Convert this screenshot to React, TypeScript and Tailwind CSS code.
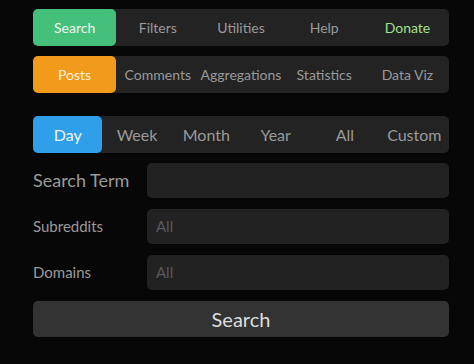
import React from "react";

const font = { fontFamily: "Lato, 'Open Sans', sans-serif" };

function TabRow({
  items,
  activeClass,
  textClass,
  extra,
}: {
  items: string[];
  activeClass: string;
  textClass: string;
  extra?: Record<string, string>;
}) {
  return (
    <div className="flex h-[37px] rounded-[5px] bg-[#232323]">
      {items.map((t, i) => (
        <div
          key={t}
          className={
            "flex flex-1 items-center justify-center rounded-[5px] " +
            textClass +
            " " +
            (i === 0 ? activeClass : extra?.[t] ?? "text-[#9a9a9a]")
          }
        >
          {t}
        </div>
      ))}
    </div>
  );
}

export default function App() {
  return (
    <div style={font} className="min-h-[364px] w-[474px] bg-[#070707] pl-[33px] pr-[25px] pt-[9px]">
      <TabRow
        items={["Search", "Filters", "Utilities", "Help", "Donate"]}
        activeClass="bg-[#45c07b] text-[#eef7ee]"
        textClass="text-[14px]"
        extra={{ Donate: "text-[#a3e08f]" }}
      />
      <div className="h-[10px]" />
      <TabRow
        items={["Posts", "Comments", "Aggregations", "Statistics", "Data Viz"]}
        activeClass="bg-[#f29a1b] text-[#fbf0dc]"
        textClass="text-[14px]"
      />
      <div className="h-[23px]" />
      <TabRow
        items={["Day", "Week", "Month", "Year", "All", "Custom"]}
        activeClass="bg-[#2e9fe8] text-[#eef6fc]"
        textClass="text-[16px]"
      />
      <div className="mt-[10px] flex flex-col gap-[11px]">
        <div className="flex items-center">
          <div className="w-[114px] text-[18px] text-[#9a9a9a]">Search Term</div>
          <div className="h-[35px] flex-1 rounded-[5px] bg-[#222222]" />
        </div>
        <div className="flex items-center">
          <div className="w-[114px] text-[15px] text-[#9a9a9a]">Subreddits</div>
          <div className="flex h-[35px] flex-1 items-center rounded-[5px] bg-[#222222] pl-[9px] text-[15px] text-[#5a5a5a]">
            All
          </div>
        </div>
        <div className="flex items-center">
          <div className="w-[114px] text-[15px] text-[#9a9a9a]">Domains</div>
          <div className="flex h-[35px] flex-1 items-center rounded-[5px] bg-[#222222] pl-[9px] text-[15px] text-[#5a5a5a]">
            All
          </div>
        </div>
        <div className="flex h-[36px] items-center justify-center rounded-[5px] bg-[#333333] text-[20px] text-[#dedede]">
          Search
        </div>
      </div>
    </div>
  );
}
